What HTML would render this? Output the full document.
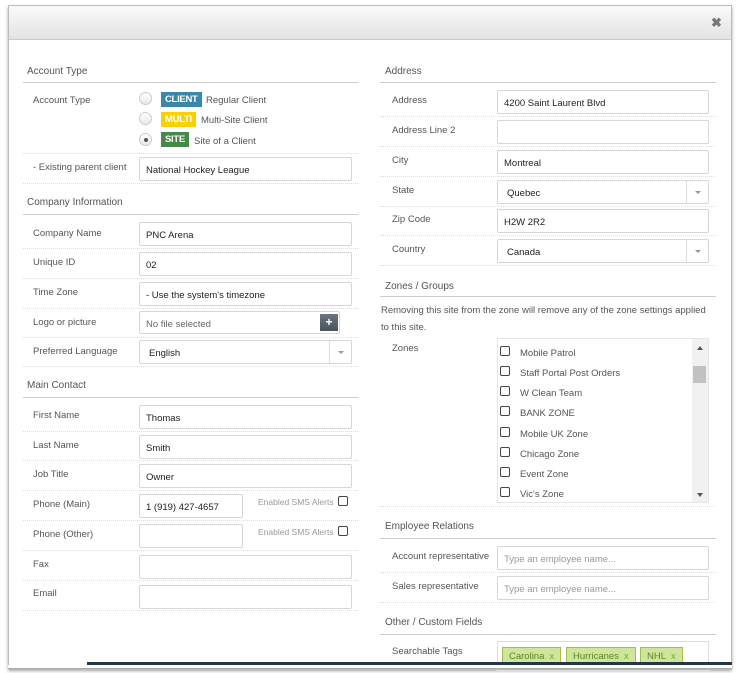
<!DOCTYPE html>
<html><head><meta charset="utf-8"><style>
*{box-sizing:border-box;margin:0;padding:0}
body{width:738px;height:673px;background:#fff;position:relative;overflow:hidden;font-family:"Liberation Sans",sans-serif;font-size:9.5px;color:#555}
.a{position:absolute;white-space:nowrap}
.modal{position:absolute;left:8px;top:5px;width:724px;height:664px;border:1px solid #bbb;background:#fff;box-shadow:0 2px 3px rgba(0,0,0,.35)}
.hdr{position:absolute;left:9px;top:6px;width:722px;height:34px;background:linear-gradient(#fafafa,#e3e3e3);border-bottom:1px solid #ccc}
.h{position:absolute;font-size:10px;color:#555;white-space:nowrap}
.ln{position:absolute;height:1px;background:#ccc}
.dl{position:absolute;height:0;border-top:1px dotted #ddd}
.in{position:absolute;border:1px solid #d6d6d6;border-radius:2px;background:#fff;height:24px;padding:7px 0 0 6px;color:#222;font-size:9.5px;white-space:nowrap}
.sel::after{content:"";position:absolute;right:0;top:0;width:21px;height:22px;border-left:1px solid #ddd}
.sel::before{content:"";position:absolute;right:7px;top:10px;border:3px solid transparent;border-top:3px solid #999}
.lb{position:absolute;font-size:9.5px;color:#555;white-space:nowrap}
.rad{position:absolute;width:13px;height:13px;border-radius:50%;border:1px solid #ccc;background:linear-gradient(#fff,#e8e8e8)}
.badge{position:absolute;color:#fff;font-weight:bold;font-size:9.5px;padding:2px 4px;height:15px;letter-spacing:-.3px}
.cb{position:absolute;width:10px;height:10px;border:1px solid #444;border-radius:2px;background:#fff}
.tag{position:absolute;top:647px;height:18px;background:#cde69c;border:1px solid #a4bc52;color:#638421;font-size:9.5px;padding:3px 6px}
.tag b{color:#7aa33a;margin-left:5px;font-weight:normal}
</style></head><body>
<div class="modal"></div>
<div class="hdr"></div>
<div class="a" style="left:711px;top:15px;font-size:13px;font-weight:bold;color:#777">✖</div>

<div class="h" style="left:27px;top:66px">Account Type</div>
<div class="ln" style="left:23px;top:82px;width:335px"></div>
<div class="lb" style="left:33px;top:95px">Account Type</div>
<div class="rad" style="left:139px;top:92px"></div>
<div class="badge" style="left:161px;top:92px;background:#3a87ad">CLIENT</div>
<div class="lb" style="left:206px;top:95px">Regular Client</div>
<div class="rad" style="left:139px;top:112px"></div>
<div class="badge" style="left:161px;top:112px;background:#f8d200">MULTI</div>
<div class="lb" style="left:201px;top:115px">Multi-Site Client</div>
<div class="rad" style="left:139px;top:133px"></div>
<div class="a" style="left:144px;top:138px;width:4px;height:4px;border-radius:50%;background:#555"></div>
<div class="badge" style="left:161px;top:132px;background:#468847">SITE</div>
<div class="lb" style="left:194px;top:136px">Site of a Client</div>
<div class="dl" style="left:23px;top:153px;width:335px"></div>
<div class="lb" style="left:33px;top:162px">- Existing parent client</div>
<div class="in" style="left:139px;top:157px;width:213px">National Hockey League</div>
<div class="dl" style="left:23px;top:183px;width:335px"></div>

<div class="h" style="left:27px;top:197px">Company Information</div>
<div class="ln" style="left:23px;top:214px;width:335px"></div>
<div class="lb" style="left:33px;top:228px">Company Name</div>
<div class="in" style="left:139px;top:222px;width:213px">PNC Arena</div>
<div class="dl" style="left:23px;top:248px;width:335px"></div>
<div class="lb" style="left:33px;top:257px">Unique ID</div>
<div class="in" style="left:139px;top:252px;width:213px">02</div>
<div class="dl" style="left:23px;top:278px;width:335px"></div>
<div class="lb" style="left:33px;top:287px">Time Zone</div>
<div class="in" style="left:139px;top:282px;width:213px">- Use the system's timezone</div>
<div class="dl" style="left:23px;top:308px;width:335px"></div>
<div class="lb" style="left:33px;top:317px">Logo or picture</div>
<div class="in" style="left:139px;top:311px;width:201px;height:23px;color:#666">No file selected</div>
<div class="a" style="left:320px;top:314px;width:18px;height:17px;background:linear-gradient(#6b7580,#4a545e);color:#fff;font-weight:bold;font-size:12px;text-align:center;line-height:17px">+</div>
<div class="dl" style="left:23px;top:337px;width:335px"></div>
<div class="lb" style="left:33px;top:346px">Preferred Language</div>
<div class="in sel" style="left:139px;top:340px;width:213px;padding-left:9px">English</div>
<div class="dl" style="left:23px;top:366px;width:335px"></div>

<div class="h" style="left:27px;top:380px">Main Contact</div>
<div class="ln" style="left:23px;top:397px;width:335px"></div>
<div class="lb" style="left:33px;top:410px">First Name</div>
<div class="in" style="left:139px;top:405px;width:213px">Thomas</div>
<div class="dl" style="left:23px;top:431px;width:335px"></div>
<div class="lb" style="left:33px;top:440px">Last Name</div>
<div class="in" style="left:139px;top:435px;width:213px">Smith</div>
<div class="dl" style="left:23px;top:460px;width:335px"></div>
<div class="lb" style="left:33px;top:469px">Job Title</div>
<div class="in" style="left:139px;top:464px;width:213px">Owner</div>
<div class="dl" style="left:23px;top:490px;width:335px"></div>
<div class="lb" style="left:33px;top:499px">Phone (Main)</div>
<div class="in" style="left:139px;top:494px;width:104px">1 (919) 427-4657</div>
<div class="lb" style="left:258px;top:497px;color:#999;font-size:8.5px">Enabled SMS Alerts</div>
<div class="cb" style="left:338px;top:496px"></div>
<div class="dl" style="left:23px;top:520px;width:335px"></div>
<div class="lb" style="left:33px;top:529px">Phone (Other)</div>
<div class="in" style="left:139px;top:524px;width:104px"></div>
<div class="lb" style="left:258px;top:527px;color:#999;font-size:8.5px">Enabled SMS Alerts</div>
<div class="cb" style="left:338px;top:526px"></div>
<div class="dl" style="left:23px;top:550px;width:335px"></div>
<div class="lb" style="left:33px;top:559px">Fax</div>
<div class="in" style="left:139px;top:555px;width:213px"></div>
<div class="dl" style="left:23px;top:580px;width:335px"></div>
<div class="lb" style="left:33px;top:588px">Email</div>
<div class="in" style="left:139px;top:585px;width:213px"></div>
<div class="dl" style="left:23px;top:610px;width:335px"></div>

<div class="h" style="left:385px;top:66px">Address</div>
<div class="ln" style="left:380px;top:82px;width:336px"></div>
<div class="lb" style="left:392px;top:95px">Address</div>
<div class="in" style="left:497px;top:90px;width:212px">4200 Saint Laurent Blvd</div>
<div class="dl" style="left:380px;top:116px;width:336px"></div>
<div class="lb" style="left:392px;top:125px">Address Line 2</div>
<div class="in" style="left:497px;top:120px;width:212px"></div>
<div class="dl" style="left:380px;top:146px;width:336px"></div>
<div class="lb" style="left:392px;top:155px">City</div>
<div class="in" style="left:497px;top:150px;width:212px">Montreal</div>
<div class="dl" style="left:380px;top:176px;width:336px"></div>
<div class="lb" style="left:392px;top:185px">State</div>
<div class="in sel" style="left:497px;top:180px;width:212px;padding-left:9px">Quebec</div>
<div class="dl" style="left:380px;top:206px;width:336px"></div>
<div class="lb" style="left:392px;top:214px">Zip Code</div>
<div class="in" style="left:497px;top:209px;width:212px">H2W 2R2</div>
<div class="dl" style="left:380px;top:235px;width:336px"></div>
<div class="lb" style="left:392px;top:244px">Country</div>
<div class="in sel" style="left:497px;top:239px;width:212px;padding-left:9px">Canada</div>
<div class="dl" style="left:380px;top:265px;width:336px"></div>

<div class="h" style="left:385px;top:281px">Zones / Groups</div>
<div class="ln" style="left:380px;top:296px;width:336px"></div>
<div class="lb" style="left:381px;top:305px">Removing this site from the zone will remove any of the zone settings applied</div>
<div class="lb" style="left:381px;top:322px">to this site.</div>
<div class="lb" style="left:392px;top:343px">Zones</div>
<div class="a" style="left:497px;top:338px;width:212px;height:165px;border:1px solid #e5e5e5;background:#fff"></div>
<div class="a" style="left:692px;top:339px;width:16px;height:163px;background:#f1f1f1"></div>
<div class="a" style="left:693px;top:366px;width:13px;height:17px;background:#c1c1c1"></div>
<div class="a" style="left:697px;top:346px;border:3px solid transparent;border-bottom:4px solid #555;border-top:0"></div>
<div class="a" style="left:697px;top:493px;border:3px solid transparent;border-top:4px solid #555;border-bottom:0"></div>
<div class="cb" style="left:500px;top:346px"></div><div class="lb" style="left:520px;top:348px">Mobile Patrol</div>
<div class="cb" style="left:500px;top:366px"></div><div class="lb" style="left:520px;top:368px">Staff Portal Post Orders</div>
<div class="cb" style="left:500px;top:386px"></div><div class="lb" style="left:520px;top:388px">W Clean Team</div>
<div class="cb" style="left:500px;top:406px"></div><div class="lb" style="left:520px;top:408px">BANK ZONE</div>
<div class="cb" style="left:500px;top:427px"></div><div class="lb" style="left:520px;top:429px">Mobile UK Zone</div>
<div class="cb" style="left:500px;top:447px"></div><div class="lb" style="left:520px;top:449px">Chicago Zone</div>
<div class="cb" style="left:500px;top:467px"></div><div class="lb" style="left:520px;top:469px">Event Zone</div>
<div class="cb" style="left:500px;top:487px"></div><div class="lb" style="left:520px;top:489px">Vic's Zone</div>
<div class="dl" style="left:380px;top:506px;width:336px"></div>

<div class="h" style="left:385px;top:521px">Employee Relations</div>
<div class="ln" style="left:380px;top:538px;width:336px"></div>
<div class="lb" style="left:392px;top:551px">Account representative</div>
<div class="in" style="left:497px;top:546px;width:212px;color:#999">Type an employee name...</div>
<div class="dl" style="left:380px;top:572px;width:336px"></div>
<div class="lb" style="left:392px;top:581px">Sales representative</div>
<div class="in" style="left:497px;top:576px;width:212px;color:#999">Type an employee name...</div>
<div class="dl" style="left:380px;top:602px;width:336px"></div>

<div class="h" style="left:385px;top:617px">Other / Custom Fields</div>
<div class="ln" style="left:380px;top:634px;width:336px"></div>
<div class="lb" style="left:392px;top:646px">Searchable Tags</div>
<div class="a" style="left:497px;top:641px;width:212px;height:30px;border:1px solid #ddd"></div>
<div class="tag" style="left:502px">Carolina<b>x</b></div>
<div class="tag" style="left:566px">Hurricanes<b>x</b></div>
<div class="tag" style="left:640px">NHL<b>x</b></div>
<div class="a" style="left:87px;top:662px;width:645px;height:3px;background:#243746"></div>
<div class="a" style="left:8px;top:665px;width:724px;height:4px;background:#fff;border-bottom:1px solid #aaa"></div>
</body></html>
